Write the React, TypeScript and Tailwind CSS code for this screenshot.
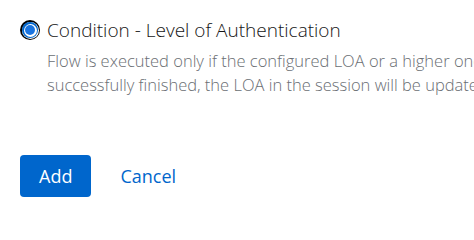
export default function App() {
  return (
    <div
      className="h-[210px] w-[474px] overflow-hidden bg-white"
      style={{ fontFamily: '"Open Sans", "Noto Sans", sans-serif' }}
    >
      <div className="flex items-start gap-[7px] pl-5 pt-5">
        {/* radio, focused and checked */}
        <div className="flex h-5 w-5 shrink-0 items-center justify-center rounded-full bg-black">
          <div className="flex h-[17px] w-[17px] items-center justify-center rounded-full bg-white">
            <div className="flex h-[16px] w-[16px] items-center justify-center rounded-full bg-[#0066cc]">
              <div className="flex h-[13px] w-[13px] items-center justify-center rounded-full bg-white">
                <div className="h-[10px] w-[10px] rounded-full bg-[#1a74e0]" />
              </div>
            </div>
          </div>
        </div>
        <div>
          <div className="-mt-[1px] whitespace-nowrap text-[19px] font-light leading-[22px] text-[#151515]">
            Condition - Level of Authentication
          </div>
          <p className="mt-[8px] whitespace-nowrap text-[16.5px] font-light leading-[24px] text-[#6a6e73]">
            Flow is executed only if the configured LOA or a higher one has been requested
            <br />
            successfully finished, the LOA in the session will be updated to this level
          </p>
        </div>
      </div>
      <div className="mt-[58px] flex items-center gap-[10px] px-5">
        <button className="h-[42px] rounded-[4px] bg-[#0066cc] px-[19px] text-[18px] text-white">
          Add
        </button>
        <button className="h-[42px] px-[19px] text-[18px] text-[#0066cc]">Cancel</button>
      </div>
    </div>
  );
}
